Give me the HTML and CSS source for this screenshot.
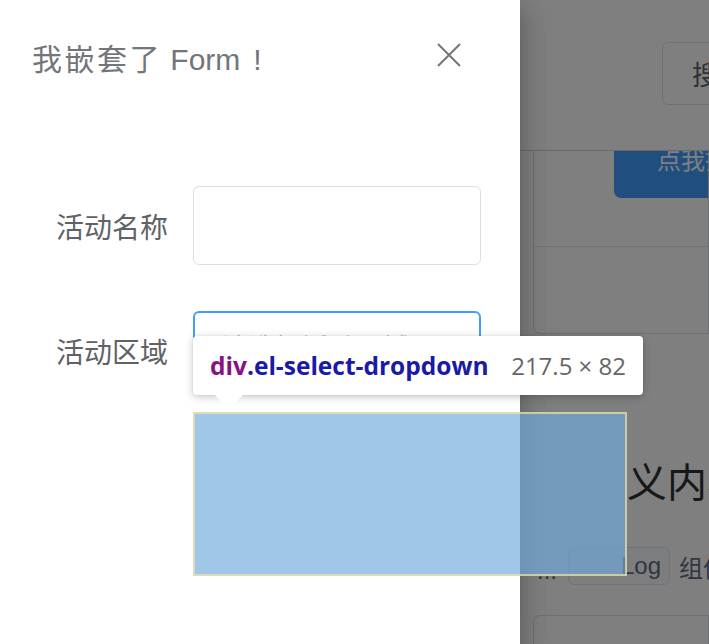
FILE: index.html
```html
<!DOCTYPE html>
<html lang="zh-CN">
<head>
<meta charset="utf-8">
<title>Drawer Form</title>
<link rel="stylesheet" href="styles.css">
</head>
<body>
<div class="screen">
  <aside class="drawer">
    <header class="drawer-header">
      <span class="drawer-title"><span class="cjk">我嵌套了</span> Form<span class="bang">!</span></span>
      <button class="close" aria-label="关闭">
        <svg width="24" height="24" viewBox="0 0 24 24"><path d="M1 1L23 23M23 1L1 23" stroke="#72767b" stroke-width="2" fill="none"/></svg>
      </button>
    </header>
    <form class="form">
      <div class="row">
        <label class="label">活动名称</label>
        <div class="input"></div>
      </div>
      <div class="row">
        <label class="label">活动区域</label>
        <div class="input select"><span class="placeholder">请选择活动区域</span></div>
      </div>
    </form>
  </aside>

  <main class="page">
    <div class="page-header">
      <span class="search-btn">搜索</span>
    </div>
    <div class="page-body">
      <div class="card">
        <div class="card-row">
          <span class="primary-btn">点我打开</span>
        </div>
        <div class="card-row empty"></div>
      </div>
      <h2 class="doc-title">义内容</h2>
      <p class="doc-text"><span class="dots">...</span><code class="code">Log</code><span class="after">组件的内容</span></p>
      <div class="card card-bottom"></div>
    </div>
    <div class="mask"></div>
  </main>

  <div class="inspect-tip">
    <span class="tip-name"><span class="tag">div</span><span class="cls">.el-select-dropdown</span></span>
    <span class="tip-size">217.5 × 82</span>
    <span class="tip-arrow"></span>
  </div>
  <div class="inspect-box"></div>
</div>
</body>
</html>
```

FILE: styles.css
```css
* { box-sizing: border-box; }
html, body { margin: 0; padding: 0; }
body {
  width: 709px;
  height: 644px;
  overflow: hidden;
  background: #fff;
  font-family: "Liberation Sans", "Noto Sans CJK SC", sans-serif;
}
.screen {
  position: relative;
  display: flex;
  width: 709px;
  height: 644px;
}

/* Drawer */
.drawer {
  position: relative;
  z-index: 2;
  width: 520px;
  flex: none;
  height: 644px;
  background: #fff;
  box-shadow: 0 8px 10px -5px rgba(0,0,0,.2), 0 16px 24px 2px rgba(0,0,0,.14), 0 6px 30px 5px rgba(0,0,0,.12);
}
.drawer-header {
  display: flex;
  justify-content: space-between;
  align-items: center;
  padding: 37px 59px 0 32px;
}
.drawer-title {
  font-size: 30px;
  line-height: 40px;
  color: #72767b;
  white-space: nowrap;
}
.drawer-title .cjk {
  font-family: "Noto Sans CJK SC", sans-serif;
  letter-spacing: 2.5px;
}
.drawer-title .bang {
  margin-left: 13px;
}
.close {
  border: 0;
  padding: 0;
  background: none;
  width: 24px;
  height: 24px;
  margin-top: -8px;
  display: flex;
}
.form {
  margin-top: 106px;
  padding-left: 32px;
}
.row {
  display: flex;
  align-items: center;
  margin-bottom: 46px;
}
.label {
  width: 161px;
  padding-right: 25px;
  text-align: right;
  font-family: "Noto Sans CJK SC", sans-serif;
  font-size: 28px;
  color: #606266;
  white-space: nowrap;
}
.input {
  width: 288px;
  height: 79px;
  border: 1.5px solid #dcdfe6;
  border-radius: 6px;
  display: flex;
  align-items: center;
  padding-left: 26px;
}
.input.select { border: 2px solid #409eff; }
.placeholder {
  font-family: "Noto Sans CJK SC", sans-serif;
  font-size: 27px;
  color: #c0c4cc;
  margin-bottom: 8px;
  white-space: nowrap;
}

/* Background page (masked) */
.page {
  position: relative;
  flex: 1;
  height: 644px;
  overflow: hidden;
  background: #fff;
}
.page-header {
  height: 151px;
  border-bottom: 1.5px solid #d4d4d6;
  padding: 42px 0 0 142px;
}
.search-btn {
  display: inline-flex;
  align-items: center;
  height: 63px;
  width: 130px;
  padding-left: 29px;
  border: 1.5px solid #dcdfe6;
  border-radius: 6px;
  font-family: "Noto Sans CJK SC", sans-serif;
  font-size: 27px;
  color: #606266;
  white-space: nowrap;
}
.page-body {
  padding-left: 13px;
}
.card {
  border: 1.5px solid #dcdfe6;
  border-top: 0;
  border-radius: 0 0 0 7px;
  overflow: hidden;
}
.card-row {
  display: flow-root;
  height: 96px;
  border-bottom: 1.5px solid #e4e7ef;
  padding-left: 80px;
}
.card-row.empty {
  height: 86px;
  border-bottom: 0;
}
.primary-btn {
  display: flex;
  align-items: center;
  height: 72px;
  margin-top: -25px;
  padding-left: 43px;
  padding-bottom: 8px;
  width: 200px;
  background: #409eff;
  border-radius: 0 0 0 7px;
  font-family: "Noto Sans CJK SC", sans-serif;
  font-size: 24px;
  color: #fff;
  white-space: nowrap;
}
.doc-title {
  margin: 118px 0 0 94px;
  font-family: "Noto Sans CJK SC", sans-serif;
  font-size: 40px;
  line-height: 56px;
  font-weight: 400;
  color: #303133;
  white-space: nowrap;
}
.doc-text {
  display: flex;
  align-items: center;
  margin: 39px 0 0 4px;
  height: 38px;
  font-family: "Noto Sans CJK SC", sans-serif;
  font-size: 24px;
  color: #5e6d82;
  white-space: nowrap;
}
.doc-text > * { flex: none; }
.dots {
  width: 31px;
  font-family: "Liberation Sans", sans-serif;
  line-height: 1;
  margin-top: 10px;
}
.code {
  display: block;
  height: 38px;
  line-height: 36px;
  padding: 0 8px 0 52px;
  margin-right: 9px;
  border: 1.5px solid #e4e7ed;
  border-radius: 6px;
  background: #f9fafc;
  font-family: "Liberation Sans", sans-serif;
  font-size: 24px;
  color: #5e6d82;
}
.card-bottom {
  margin-top: 30px;
  height: 60px;
  border-top: 1.5px solid #dcdfe6;
  border-bottom: 0;
  border-radius: 7px 0 0 0;
}
.mask {
  position: absolute;
  inset: 0;
  background: rgba(0,0,0,.5);
}

/* DevTools inspect overlay */
.inspect-tip {
  position: absolute;
  z-index: 5;
  left: 193px;
  top: 336px;
  width: 450px;
  height: 59px;
  padding: 0 17px;
  display: flex;
  align-items: center;
  justify-content: space-between;
  background: #fff;
  border-radius: 4px;
  box-shadow: 0 2px 8px rgba(0,0,0,.22), 0 0 2px rgba(0,0,0,.1);
  font-family: "Open Sans", sans-serif;
}
.tip-name {
  font-size: 24.5px;
  font-weight: 700;
}
.tag { color: #881280; }
.cls { color: #1a1aa6; }
.tip-size {
  font-size: 24px;
  color: #666;
}
.tip-arrow {
  position: absolute;
  left: 22px;
  top: 59px;
  width: 0;
  height: 0;
  border-left: 14px solid transparent;
  border-right: 14px solid transparent;
  border-top: 15px solid #fff;
}
.inspect-box {
  position: absolute;
  z-index: 4;
  left: 193px;
  top: 412px;
  width: 434px;
  height: 164px;
  background: rgba(111,168,220,.66);
  border: 2px solid rgba(255,229,153,.66);
}
```
